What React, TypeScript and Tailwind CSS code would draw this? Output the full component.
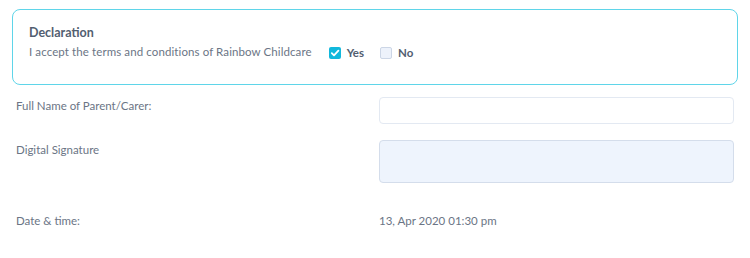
import React from "react";

export default function App() {
  return (
    <div className="w-[750px] h-[258px] bg-white text-[#6b7585] text-[11.5px]" style={{ fontFamily: "Lato, 'Noto Sans', sans-serif" }}>
      <div className="pt-[9px] px-[12px]">
        <div className="h-[76px] border border-[#5fd5e9] rounded-[8px] px-[16px] pt-[15px]">
          <div className="text-[12.5px] font-bold text-[#525e70] leading-[16px]">Declaration</div>
          <div className="flex items-center mt-[2px] leading-[16px]">
            <span className="tracking-[0.1px]">I accept the terms and conditions of Rainbow Childcare</span>
            <div className="flex items-center ml-[17px] mt-[2px]">
              <span className="w-[12px] h-[12px] rounded-[2px] bg-[#12b8dc] flex items-center justify-center">
                <svg width="10" height="10" viewBox="0 0 10 10" fill="none">
                  <path d="M1.8 5.2 L4 7.4 L8.4 2.6" stroke="white" strokeWidth="1.8" strokeLinecap="round" strokeLinejoin="round" />
                </svg>
              </span>
              <span className="ml-[6px] font-bold text-[#525e70]">Yes</span>
              <span className="ml-[16px] w-[12px] h-[12px] rounded-[2px] bg-[#edf2fb] border border-[#ccd6e6]" />
              <span className="ml-[6px] font-bold text-[#525e70]">No</span>
            </div>
          </div>
        </div>
      </div>
      <div className="flex mt-[12px] px-[16px]">
        <div className="w-[363px] pt-[1px] leading-[16px]">Full Name of Parent/Carer:</div>
        <div className="w-[355px] h-[27px] border border-[#e3e9f2] rounded-[4px] bg-white" />
      </div>
      <div className="flex mt-[16px] px-[16px]">
        <div className="w-[363px] pt-[2px] leading-[16px]">Digital Signature</div>
        <div className="w-[355px] h-[43px] border border-[#d4ddeb] rounded-[4px] bg-[#eef4fd]" />
      </div>
      <div className="flex mt-[30px] px-[16px] leading-[16px]">
        <div className="w-[363px]">Date &amp; time:</div>
        <div>13, Apr 2020 01:30 pm</div>
      </div>
    </div>
  );
}
